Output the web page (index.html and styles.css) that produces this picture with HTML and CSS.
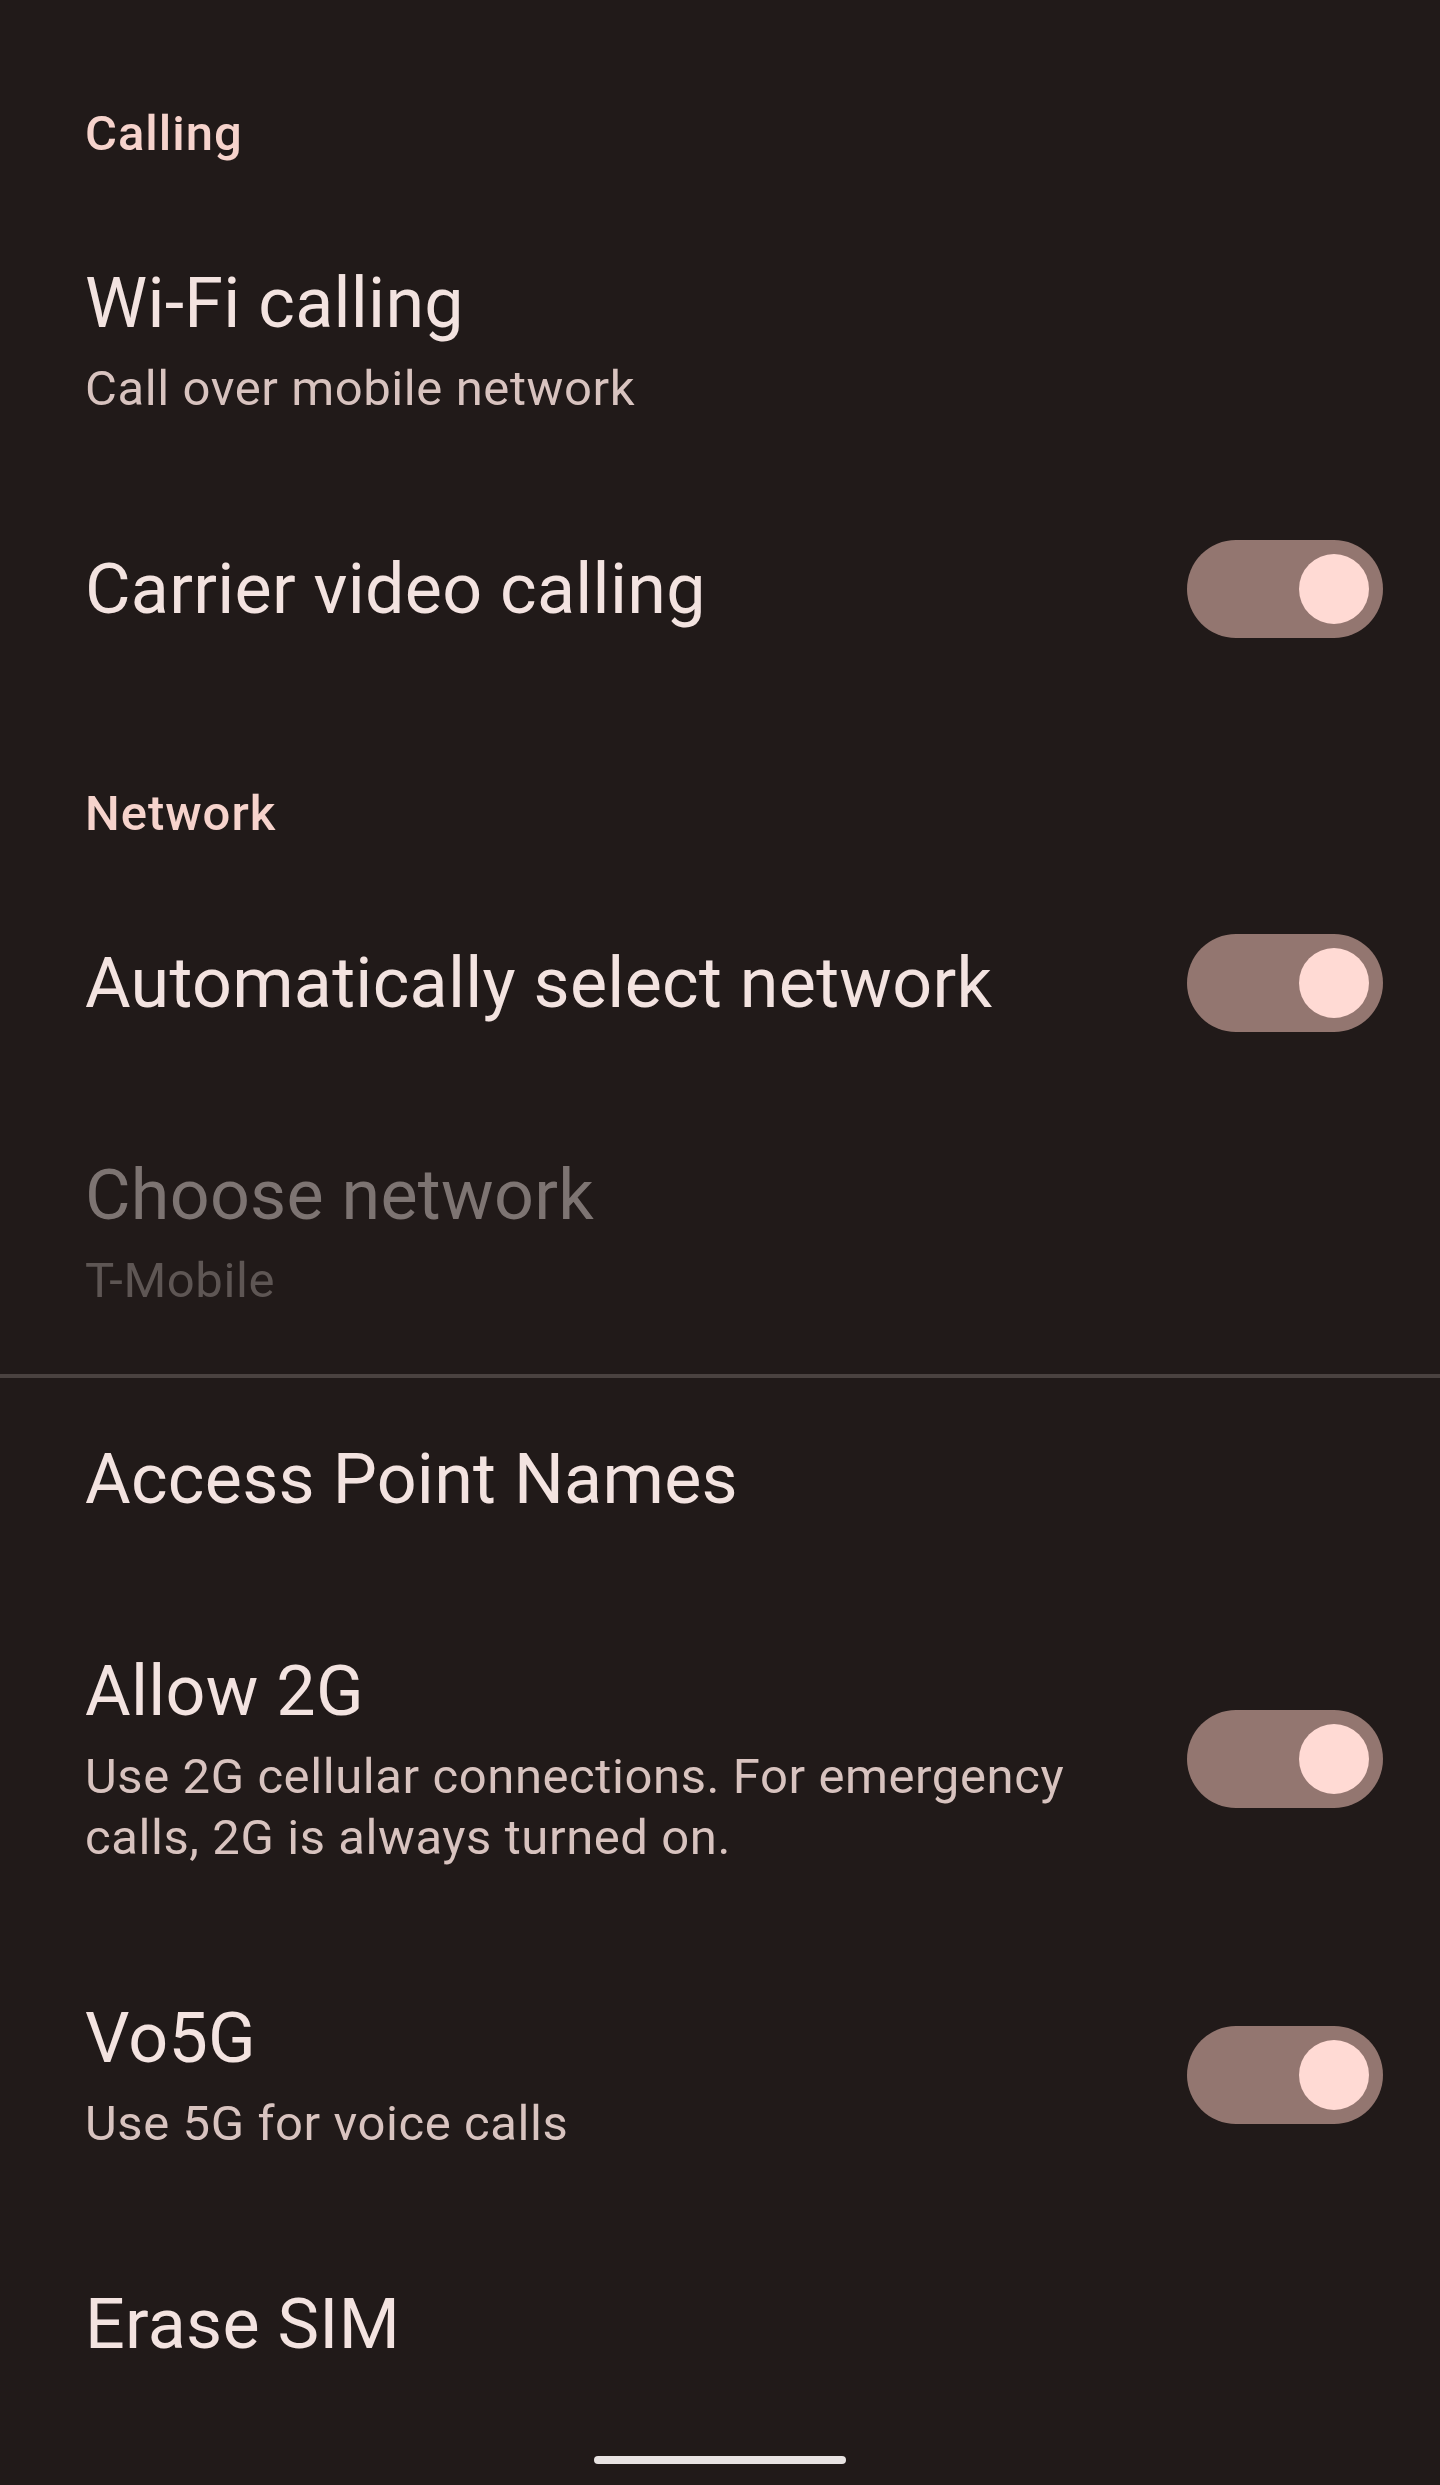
FILE: index.html
```html
<!DOCTYPE html>
<html lang="en">
<head>
<meta charset="utf-8">
<title>SIM settings</title>
<link rel="stylesheet" href="styles.css">
</head>
<body>
<main class="screen">
  <div class="category category-first">Calling</div>

  <div class="pref">
    <div class="pref-text">
      <div class="pref-title">Wi-Fi calling</div>
      <div class="pref-summary">Call over mobile network</div>
    </div>
  </div>

  <div class="pref">
    <div class="pref-text">
      <div class="pref-title">Carrier video calling</div>
    </div>
    <div class="switch"><span class="thumb"></span></div>
  </div>

  <div class="category">Network</div>

  <div class="pref">
    <div class="pref-text">
      <div class="pref-title">Automatically select network</div>
    </div>
    <div class="switch"><span class="thumb"></span></div>
  </div>

  <div class="pref pref-disabled">
    <div class="pref-text">
      <div class="pref-title">Choose network</div>
      <div class="pref-summary">T-Mobile</div>
    </div>
  </div>

  <div class="divider"></div>

  <div class="pref pref-after-divider">
    <div class="pref-text">
      <div class="pref-title">Access Point Names</div>
    </div>
  </div>

  <div class="pref">
    <div class="pref-text">
      <div class="pref-title">Allow 2G</div>
      <div class="pref-summary">Use 2G cellular connections. For emergency<br>calls, 2G is always turned on.</div>
    </div>
    <div class="switch"><span class="thumb"></span></div>
  </div>

  <div class="pref">
    <div class="pref-text">
      <div class="pref-title">Vo5G</div>
      <div class="pref-summary">Use 5G for voice calls</div>
    </div>
    <div class="switch"><span class="thumb"></span></div>
  </div>

  <div class="pref">
    <div class="pref-text">
      <div class="pref-title">Erase SIM</div>
    </div>
  </div>

  <div class="nav-handle"></div>
</main>
</body>
</html>
```

FILE: styles.css
```css
html, body {
  margin: 0;
  padding: 0;
  background: #211a19;
}

body {
  font-family: Roboto, "Liberation Sans", sans-serif;
  color: #f3e3e0;
}

.screen {
  position: relative;
  width: 1440px;
  height: 2485px;
  overflow: hidden;
  background: #211a19;
}

.category {
  padding: 89px 57px 32px 85px;
  font-size: 49px;
  line-height: 61px;
  font-weight: 500;
  letter-spacing: 0.02em;
  color: #f6d3cc;
}

.category-first {
  padding-top: 103px;
}

.pref {
  display: flex;
  align-items: center;
  padding: 65px 57px 63px 85px;
}

.pref-text {
  flex: 1;
  min-width: 0;
}

.pref-title {
  font-size: 70px;
  line-height: 84px;
  letter-spacing: 0.004em;
  color: #f3e3e0;
}

.pref-summary {
  margin-top: 13px;
  font-size: 49px;
  line-height: 61px;
  letter-spacing: 0.012em;
  color: #d8c3bf;
}

.pref-disabled .pref-title {
  color: #7d7472;
}

.pref-disabled .pref-summary {
  color: #5e5654;
}

.pref-after-divider {
  padding-top: 59px;
}

.divider {
  height: 4px;
  background: #4a4240;
}

.switch {
  flex: none;
  position: relative;
  width: 196px;
  height: 98px;
  margin: -7px 0 -7px 40px;
  border-radius: 49px;
  background: #937670;
}

.switch .thumb {
  position: absolute;
  top: 14px;
  right: 14px;
  width: 70px;
  height: 70px;
  border-radius: 50%;
  background: #ffdad4;
}

.nav-handle {
  position: absolute;
  left: 594px;
  top: 2456px;
  width: 252px;
  height: 8px;
  border-radius: 4px;
  background: #e8e3e2;
}
```
